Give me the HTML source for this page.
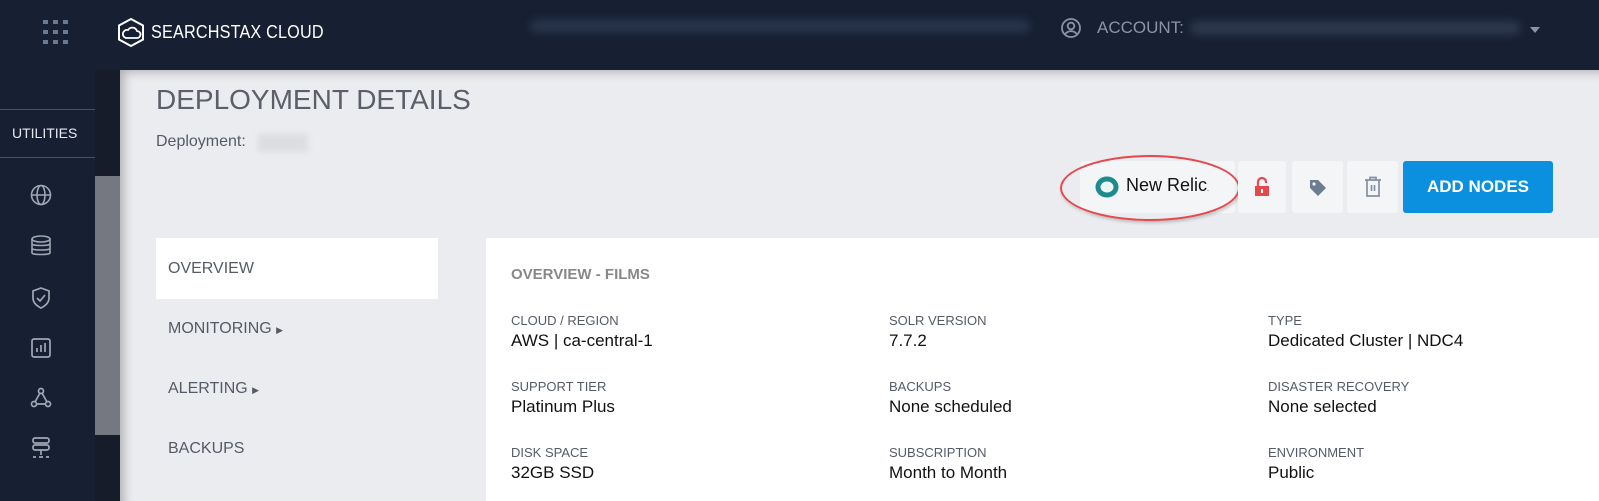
<!DOCTYPE html>
<html><head><meta charset="utf-8"><style>
*{margin:0;padding:0;box-sizing:border-box}
body{width:1599px;height:501px;overflow:hidden;background:#ebecef;font-family:"Liberation Sans",Arial,sans-serif;position:relative}
.top{position:absolute;left:0;top:0;width:1599px;height:70px;background:#172033}
.side{position:absolute;left:0;top:70px;width:95px;height:431px;background:#172033}
.col{position:absolute;left:95px;top:70px;width:25px;height:431px;background:#161c29}
.col .g{position:absolute;left:0;top:106px;width:25px;height:259px;background:#757880}
.main{position:absolute;left:120px;top:70px;width:1479px;height:431px;background:#ebecef;box-shadow:inset 8px 6px 10px -4px rgba(0,0,0,.25)}
.abs{position:absolute}
.hr{position:absolute;left:0;width:95px;height:1px;background:#4a5366}
.ico{position:absolute;left:29px}
.btn{position:absolute;top:161px;height:52px;background:#f3f5f7;border-radius:3px}
.lbl{font-size:13px;color:#555b66;position:absolute}
.val{font-size:17px;color:#111;position:absolute}
.nav{position:absolute;left:168px;font-size:16px;color:#555b66}
</style></head><body>
<div class="top"></div>
<div class="side"></div>
<div class="col"><div class="g"></div></div>
<div class="main"></div>
<svg class="abs" style="left:42px;top:19px" width="28" height="26"><g fill="#6b7a93"><rect x="1" y="1" width="5" height="4"/><rect x="11" y="1" width="5" height="4"/><rect x="21" y="1" width="5" height="4"/><rect x="1" y="11" width="5" height="4"/><rect x="11" y="11" width="5" height="4"/><rect x="21" y="11" width="5" height="4"/><rect x="1" y="21" width="5" height="4"/><rect x="11" y="21" width="5" height="4"/><rect x="21" y="21" width="5" height="4"/></g></svg>
<svg class="abs" style="left:118px;top:17px" width="30" height="31"><polygon points="13,2 25,8.5 25,22.5 13,29 1,22.5 1,8.5" fill="none" stroke="#fff" stroke-width="2"/><path d="M8,21 h11 a3.5,3.5 0 0 0 0,-7 a5,5 0 0 0 -9,-1 a4,4 0 0 0 -2,8z" fill="none" stroke="#fff" stroke-width="1.8"/></svg>
<div class="abs" style="left:151px;top:22px;color:#fff;font-size:18px;letter-spacing:.2px;transform:scaleX(.9);transform-origin:left">SEARCHSTAX CLOUD</div>
<div class="abs" style="left:530px;top:19px;width:500px;height:14px;background:#27334a;border-radius:7px;filter:blur(4px)"></div>
<svg class="abs" style="left:1060px;top:17px" width="22" height="22"><circle cx="11" cy="11" r="9" fill="none" stroke="#8a94a8" stroke-width="1.8"/><circle cx="11" cy="9" r="3.3" fill="none" stroke="#8a94a8" stroke-width="1.8"/><path d="M5,17 q6,-6 12,0" fill="none" stroke="#8a94a8" stroke-width="1.8"/></svg>
<div class="abs" style="left:1097px;top:18px;color:#8a94a8;font-size:17px">ACCOUNT:</div>
<div class="abs" style="left:1190px;top:21px;width:330px;height:14px;background:#2c374d;border-radius:6px;filter:blur(4px)"></div>
<div class="abs" style="left:1530px;top:27px;border:5px solid transparent;border-top:6px solid #8a94a8"></div>
<div class="hr" style="top:109px"></div><div class="hr" style="top:157px"></div>
<div class="abs" style="left:12px;top:125px;color:#e6e9ef;font-size:14px">UTILITIES</div>
<svg class="ico" style="top:183px" width="24" height="24" fill="none" stroke="#a0a7b4" stroke-width="1.6"><circle cx="12" cy="12" r="9.5"/><ellipse cx="12" cy="12" rx="4" ry="9.5"/><path d="M2.5,12h19"/></svg>
<svg class="ico" style="top:234px" width="24" height="24" fill="none" stroke="#a0a7b4" stroke-width="1.6"><ellipse cx="12" cy="5" rx="9" ry="3"/><path d="M3,5v14c0,2 18,2 18,0V5M3,10c0,2 18,2 18,0M3,14.5c0,2 18,2 18,0"/></svg>
<svg class="ico" style="top:286px" width="24" height="24" fill="none" stroke="#a0a7b4" stroke-width="1.7"><path d="M12,2l8,3v7c0,5 -4,8 -8,10c-4,-2 -8,-5 -8,-10V5z"/><path d="M8,12l3,3l5,-6"/></svg>
<svg class="ico" style="top:336px" width="24" height="24" fill="none" stroke="#a0a7b4" stroke-width="1.7"><rect x="3" y="3" width="18" height="18" rx="2"/><path d="M8,16v-4M12,16v-7M16,16v-9"/></svg>
<svg class="ico" style="top:386px" width="24" height="24" fill="none" stroke="#a0a7b4" stroke-width="1.7"><circle cx="12" cy="5" r="2.5"/><circle cx="5" cy="18" r="2.5"/><circle cx="19" cy="18" r="2.5"/><path d="M11,7l-5,9M13,7l5,9M7.5,18h9"/></svg>
<svg class="ico" style="top:436px" width="24" height="24" fill="none" stroke="#a0a7b4" stroke-width="1.7"><rect x="4" y="2" width="16" height="5" rx="2"/><rect x="4" y="9" width="16" height="5" rx="2"/><path d="M12,14v5M4,21h3M10,21h4M17,21h3"/></svg>
<div class="abs" style="left:156px;top:84px;font-size:28px;color:#5a5f69">DEPLOYMENT DETAILS</div>
<div class="abs" style="left:156px;top:133px;font-size:16px;color:#555b66">Deployment:</div>
<div class="abs" style="left:258px;top:134px;width:50px;height:18px;background:#dcdde1;filter:blur(3px)"></div>
<div class="btn" style="left:1080px;width:155px"></div>
<div class="abs" style="left:1060px;top:155px;width:180px;height:66px;border:2px solid #e5484d;border-radius:50%;box-shadow:1px 2px 3px rgba(0,0,0,.2)"></div>
<svg class="abs" style="left:1095px;top:176px" width="24" height="22"><ellipse cx="12" cy="11" rx="9" ry="8" fill="none" stroke="#1d8a8e" stroke-width="5"/><circle cx="12" cy="11" r="4" fill="#e8f6f6"/></svg>
<div class="abs" style="left:1126px;top:175px;font-size:18px;color:#111">New Relic<span style="font-size:7px">.</span></div>
<div class="btn" style="left:1238px;width:48px"></div>
<svg class="abs" style="left:1253px;top:176px" width="20" height="22"><path d="M5,10V6a4,4 0 0 1 8,0v1" fill="none" stroke="#e5484d" stroke-width="2.2"/><rect x="2" y="10" width="14" height="10" fill="#e5484d"/><rect x="8" y="13" width="2" height="4" fill="#fff"/></svg>
<div class="btn" style="left:1292px;width:51px"></div>
<svg class="abs" style="left:1308px;top:178px" width="20" height="20"><path d="M2,2h8l8,8l-8,8l-8,-8z" fill="#6d7c93"/><circle cx="6" cy="6" r="1.6" fill="#f3f5f7"/></svg>
<div class="btn" style="left:1347px;width:51px"></div>
<svg class="abs" style="left:1364px;top:176px" width="18" height="22" fill="none" stroke="#8590a3" stroke-width="1.7"><path d="M1,4h16M6,4V1.5h6V4M3,4v16h12V4M7.5,9v6M10.5,9v6"/></svg>
<div class="abs" style="left:1403px;top:161px;width:150px;height:52px;background:#0b90e0;border-radius:3px;color:#fff;font-weight:bold;font-size:17px;text-align:center;line-height:52px">ADD NODES</div>
<div class="abs" style="left:156px;top:238px;width:282px;height:61px;background:#fff"></div>
<div class="nav" style="top:260px">OVERVIEW</div>
<div class="nav" style="top:320px">MONITORING <span style="font-size:9px">&#9654;</span></div>
<div class="nav" style="top:380px">ALERTING <span style="font-size:9px">&#9654;</span></div>
<div class="nav" style="top:440px">BACKUPS</div>
<div class="abs" style="left:486px;top:238px;width:1113px;height:263px;background:#fff"></div>
<div class="abs" style="left:511px;top:266px;font-size:15px;font-weight:bold;color:#888">OVERVIEW - FILMS</div>
<div class="lbl" style="left:511px;top:313px">CLOUD / REGION</div><div class="val" style="left:511px;top:331px">AWS | ca-central-1</div>
<div class="lbl" style="left:889px;top:313px">SOLR VERSION</div><div class="val" style="left:889px;top:331px">7.7.2</div>
<div class="lbl" style="left:1268px;top:313px">TYPE</div><div class="val" style="left:1268px;top:331px">Dedicated Cluster | NDC4</div>
<div class="lbl" style="left:511px;top:379px">SUPPORT TIER</div><div class="val" style="left:511px;top:397px">Platinum Plus</div>
<div class="lbl" style="left:889px;top:379px">BACKUPS</div><div class="val" style="left:889px;top:397px">None scheduled</div>
<div class="lbl" style="left:1268px;top:379px">DISASTER RECOVERY</div><div class="val" style="left:1268px;top:397px">None selected</div>
<div class="lbl" style="left:511px;top:445px">DISK SPACE</div><div class="val" style="left:511px;top:463px">32GB SSD</div>
<div class="lbl" style="left:889px;top:445px">SUBSCRIPTION</div><div class="val" style="left:889px;top:463px">Month to Month</div>
<div class="lbl" style="left:1268px;top:445px">ENVIRONMENT</div><div class="val" style="left:1268px;top:463px">Public</div>
</body></html>
